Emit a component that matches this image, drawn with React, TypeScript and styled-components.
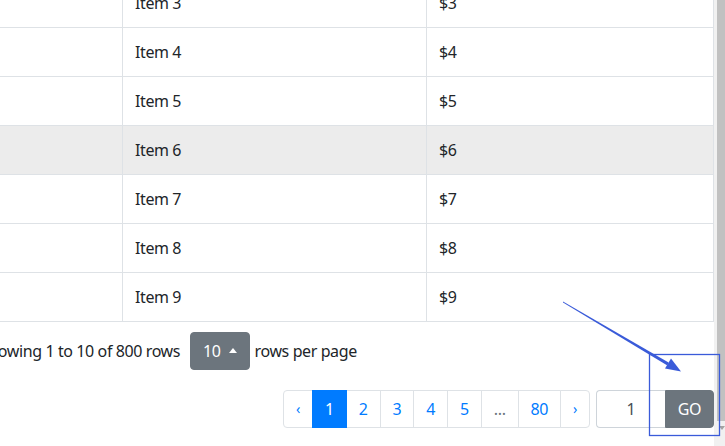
import React from 'react'
import styled, { createGlobalStyle } from 'styled-components'

const GlobalStyle = createGlobalStyle`
  html, body {
    margin: 0;
    padding: 0;
    height: 100%;
    overflow: hidden;
    background: #fff;
  }
  body {
    font-family: 'Noto Sans', 'Open Sans', Arial, sans-serif;
    font-size: 16px;
    line-height: 1.5;
    letter-spacing: -0.4px;
    color: #212529;
  }
`

const rows = [3, 4, 5, 6, 7, 8, 9]
const pages = ['1', '2', '3', '4', '5', '...', '80']

export default function App() {
  return (
    <Page>
      <GlobalStyle />
      <Main>
        <Shift>
          <Table>
            <colgroup>
              <col style={{ width: 142 }} />
              <col style={{ width: 304 }} />
              <col />
            </colgroup>
            <tbody>
              {rows.map((n) => (
                <Row key={n} hovered={n === 6}>
                  <Cell />
                  <Cell>Item {n}</Cell>
                  <Cell>${n}</Cell>
                </Row>
              ))}
            </tbody>
          </Table>

          <Detail>
            <span>Showing 1 to 10 of 800 rows</span>
            <SizeButton>
              10 <Caret />
            </SizeButton>
            <span>rows per page</span>
          </Detail>

          <PagerRow>
            <PageList>
              <PageItem>
                <PageLink small>‹</PageLink>
              </PageItem>
              {pages.map((p) => (
                <PageItem key={p}>
                  <PageLink active={p === '1'} muted={p === '...'}>
                    {p}
                  </PageLink>
                </PageItem>
              ))}
              <PageItem>
                <PageLink small>›</PageLink>
              </PageItem>
            </PageList>
            <JumpGroup>
              <JumpInput defaultValue="1" />
              <GoButton>GO</GoButton>
            </JumpGroup>
          </PagerRow>
        </Shift>
      </Main>

      <Scrollbar>
        <Thumb />
        <ScrollArrow />
      </Scrollbar>

      <Annotation width="725" height="446" viewBox="0 0 725 446">
        <polygon points="563,301.4 668.6,362.6 667.4,365.4 563,302.6" fill="#3a5bd9" />
        <polygon points="681,371.5 665,368.5 671,358.5" fill="#3a5bd9" />
        <rect x="649.5" y="354.5" width="70" height="81" fill="none" stroke="#3a5bd9" strokeWidth="1.3" />
      </Annotation>
    </Page>
  )
}

const Page = styled.div`
  display: flex;
  width: 725px;
  height: 446px;
  overflow: hidden;
  position: relative;
`

const Main = styled.div`
  width: 714px;
  flex: none;
  overflow: hidden;
`

const Shift = styled.div`
  margin: -22px 0 0 -20px;
`

const Table = styled.table`
  width: 734px;
  table-layout: fixed;
  border-collapse: collapse;
`

const Row = styled.tr<{ hovered?: boolean }>`
  background: ${({ hovered }) => (hovered ? 'rgba(0, 0, 0, 0.075)' : 'transparent')};
`

const Cell = styled.td`
  height: 24px;
  padding: 12px;
  border: 1px solid #dee2e6;
  vertical-align: top;
  white-space: nowrap;
`

const Detail = styled.div`
  display: flex;
  align-items: center;
  margin: 10px 0;
  white-space: nowrap;
`

const SizeButton = styled.button`
  display: inline-flex;
  align-items: center;
  height: 38px;
  margin: 0 5px 0 10px;
  padding: 6px 12px;
  border: 1px solid #6c757d;
  border-radius: 4px;
  background: #6c757d;
  color: #fff;
  font: inherit;
  letter-spacing: inherit;
`

const Caret = styled.span`
  display: inline-block;
  margin-left: 8px;
  margin-top: -2px;
  border-bottom: 0.32em solid;
  border-left: 0.3em solid transparent;
  border-right: 0.3em solid transparent;
`

const PagerRow = styled.div`
  display: flex;
  justify-content: flex-end;
  align-items: center;
  gap: 6px;
  margin-top: 20px;
`

const PageList = styled.ul`
  display: flex;
  list-style: none;
  margin: 0;
  padding: 0;
`

const PageItem = styled.li`
  & + & {
    margin-left: -1px;
  }
  &:first-child > * {
    border-radius: 4px 0 0 4px;
  }
  &:last-child > * {
    border-radius: 0 4px 4px 0;
  }
`

const PageLink = styled.span<{ active?: boolean; muted?: boolean; small?: boolean }>`
  display: block;
  position: relative;
  padding: 8px 12px;
  line-height: 20px;
  border: 1px solid ${({ active }) => (active ? '#007bff' : '#dee2e6')};
  background: ${({ active }) => (active ? '#007bff' : '#fff')};
  color: ${({ active, muted }) => (active ? '#fff' : muted ? '#6c757d' : '#007bff')};
  font-size: ${({ small }) => (small ? '14px' : '16px')};
  z-index: ${({ active }) => (active ? 1 : 0)};
`

const JumpGroup = styled.div`
  display: flex;
  height: 38px;
`

const JumpInput = styled.input`
  width: 69px;
  box-sizing: border-box;
  padding: 6px 12px;
  border: 1px solid #ced4da;
  border-right: none;
  border-radius: 4px 0 0 4px;
  font: inherit;
  color: #495057;
  text-align: center;
  outline: none;
`

const GoButton = styled.button`
  width: 49px;
  padding: 0;
  border: 1px solid #6c757d;
  border-radius: 0 4px 4px 0;
  background: #6c757d;
  color: #fff;
  font: inherit;
  letter-spacing: inherit;
`

const Scrollbar = styled.div`
  width: 11px;
  flex: none;
  background: #f1f1f1;
  display: flex;
  flex-direction: column;
  align-items: flex-end;
`

const Thumb = styled.div`
  width: 8px;
  height: 421px;
  background: #c1c1c1;
`

const ScrollArrow = styled.div`
  margin: 5px 0 0;
  width: 0;
  height: 0;
  border-top: 4px solid #a3a3a3;
  border-left: 3px solid transparent;
  border-right: 3px solid transparent;
`

const Annotation = styled.svg`
  position: absolute;
  left: 0;
  top: 0;
  pointer-events: none;
`
